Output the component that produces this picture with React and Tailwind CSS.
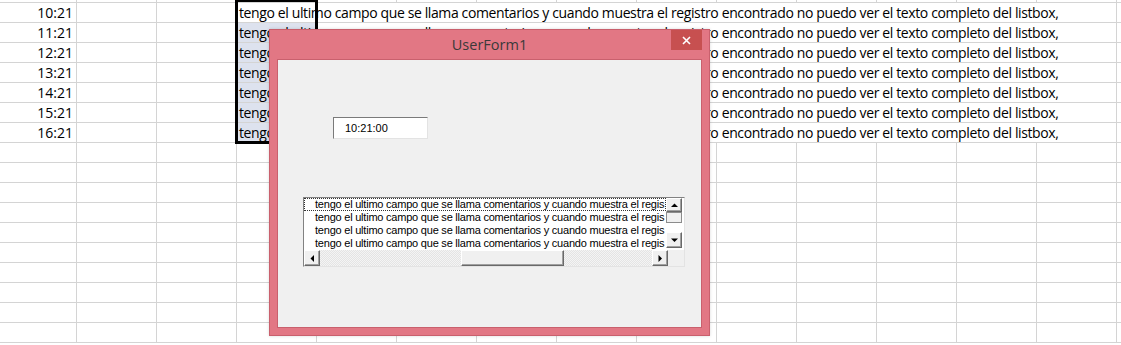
const LONG =
  'tengo el ultimo campo que se llama comentarios y cuando muestra el registro encontrado no puedo ver el texto completo del listbox,'
const ITEM = 'tengo el ultimo campo que se llama comentarios y cuando muestra el regis'
const TIMES = ['10:21', '11:21', '12:21', '13:21', '14:21', '15:21', '16:21']
const TRAIL = [0, 1, 2, 3, 4, 5, 6, 7, 8, 9, 10]

function EmptyRow() {
  return (
    <div className="flex h-[20px] border-b border-[#d4d4d4]">
      <div className="w-[77px] shrink-0 border-r border-[#d4d4d4]" />
      <div className="w-[80px] shrink-0 border-r border-[#d4d4d4]" />
      <div className="w-[80px] shrink-0 border-r border-[#d4d4d4]" />
      {TRAIL.map(i => (
        <div key={i} className="w-[80px] shrink-0 border-r border-[#d4d4d4]" />
      ))}
    </div>
  )
}

function DataRow({ time, shaded }) {
  return (
    <div className="flex h-[20px] border-b border-[#d4d4d4]">
      <div className="w-[77px] shrink-0 border-r border-[#d4d4d4] pr-[3px] text-right leading-[20px]">{time}</div>
      <div className="w-[80px] shrink-0 border-r border-[#d4d4d4]" />
      <div className="w-[80px] shrink-0 border-r border-[#d4d4d4]" />
      <div
        className={
          'w-[880px] shrink-0 border-r border-[#d4d4d4] pl-[2px] leading-[20px] whitespace-nowrap tracking-[-0.38px] ' +
          (shaded ? 'bg-[linear-gradient(to_right,#dde2ee_79px,transparent_79px)]' : '')
        }
      >
        {LONG}
      </div>
      <div className="w-[80px] shrink-0 border-r border-[#d4d4d4]" />
    </div>
  )
}

function Btn({ className = '', children }) {
  return (
    <div
      className={
        'flex items-center justify-center bg-[#f0f0f0] border border-t-white border-l-white border-r-[#696969] border-b-[#696969] shadow-[inset_-1px_-1px_0_#a0a0a0] ' +
        className
      }
    >
      {children}
    </div>
  )
}

function Tri({ dir }) {
  const pts = {
    up: '0,4 7,4 3.5,0.5',
    down: '0,0.5 7,0.5 3.5,4',
    left: '4,0 4,7 0.5,3.5',
    right: '0.5,0 0.5,7 4,3.5',
  }[dir]
  const vert = dir === 'up' || dir === 'down'
  return (
    <svg width={vert ? 7 : 5} height={vert ? 5 : 7} viewBox={vert ? '0 0 7 5' : '0 0 5 7'}>
      <polygon points={pts} fill="#000" />
    </svg>
  )
}

function ListBox() {
  return (
    <div className="ml-[25px] mt-[58px] w-[382px] h-[70px] flex flex-col border border-t-[#828282] border-l-[#828282] border-r-[#e3e3e3] border-b-[#e3e3e3] bg-white font-['Liberation_Sans',sans-serif] text-[11px] text-black">
      <div className="flex h-[52px]">
        <div className="flex-1 flex flex-col overflow-hidden">
          {[0, 1, 2, 3].map(i => (
            <div
              key={i}
              className={
                'h-[13px] leading-[13px] pl-[11px] whitespace-nowrap overflow-hidden tracking-[-0.22px] ' +
                (i === 0 ? 'outline outline-1 outline-dotted outline-[#333] -outline-offset-1' : '')
              }
            >
              {ITEM}
            </div>
          ))}
        </div>
        <div className="w-[16px] mr-[2px] flex flex-col">
          <Btn className="h-[14px]">
            <Tri dir="up" />
          </Btn>
          <div className="h-[11px] bg-[#f0f0f0] border border-[#8c8c8c]" />
          <div className="h-[9px]" />
          <Btn className="h-[16px]">
            <Tri dir="down" />
          </Btn>
        </div>
      </div>
      <div className="flex h-[17px]">
        <div className="w-[364px] flex bg-[#ebebeb] bg-[repeating-conic-gradient(#e4e4e4_0_25%,#f4f4f4_0_50%)] bg-[length:2px_2px]">
          <Btn className="w-[16px]">
            <Tri dir="left" />
          </Btn>
          <div className="w-[141px]" />
          <Btn className="w-[103px]" />
          <div className="flex-1" />
          <Btn className="w-[16px]">
            <Tri dir="right" />
          </Btn>
        </div>
        <div className="flex-1 bg-[#f0f0f0]" />
      </div>
    </div>
  )
}

function UserForm() {
  return (
    <div className="absolute left-[269px] top-[29px] w-[441px] h-[307px] flex flex-col bg-[#e27784] border border-[#c9606d] shadow-[0_0_3px_rgba(0,0,0,0.15)]">
      <div className="relative h-[29px] flex items-center justify-center">
        <span className="font-['Open_Sans',sans-serif] text-[14.5px] text-[#3a3a3a] pt-[1px]">UserForm1</span>
        <div className="absolute right-[7px] top-0 w-[31px] h-[20px] bg-[#c75050] flex items-center justify-center">
          <svg width="9" height="9" viewBox="0 0 9 9">
            <path d="M1 1L8 8M8 1L1 8" stroke="#fff" strokeWidth="1.6" />
          </svg>
        </div>
      </div>
      <div className="mx-[7px] mb-[7px] flex-1 bg-[#f0f0f0] border border-[#c9606d]">
        <div className="ml-[55px] mt-[57px] w-[95px] h-[22px] flex items-center pl-[11px] bg-white border border-t-[#7a7a7a] border-l-[#7a7a7a] border-r-[#e3e3e3] border-b-[#e3e3e3] font-['Liberation_Sans',sans-serif] text-[11px] text-black">
          10:21:00
        </div>
        <ListBox />
      </div>
    </div>
  )
}

export default function App() {
  return (
    <div className="relative w-[1121px] h-[345px] overflow-hidden bg-white font-['Open_Sans',sans-serif] text-[14px] text-black">
      <div className="h-[3px] border-b border-[#d4d4d4] flex">
        <div className="w-[77px] shrink-0 border-r border-[#d4d4d4]" />
        <div className="w-[80px] shrink-0 border-r border-[#d4d4d4]" />
        <div className="w-[80px] shrink-0 border-r border-[#d4d4d4]" />
        {TRAIL.map(i => (
          <div key={i} className="w-[80px] shrink-0 border-r border-[#d4d4d4]" />
        ))}
      </div>
      {TIMES.map((t, i) => (
        <DataRow key={t} time={t} shaded={i > 0} />
      ))}
      {[0, 1, 2, 3, 4, 5, 6, 7, 8, 9].map(i => (
        <EmptyRow key={i} />
      ))}
      <div className="absolute left-[235px] top-[-1px] w-[83px] h-[145px] border-[3px] border-black pointer-events-none" />
      <UserForm />
    </div>
  )
}
